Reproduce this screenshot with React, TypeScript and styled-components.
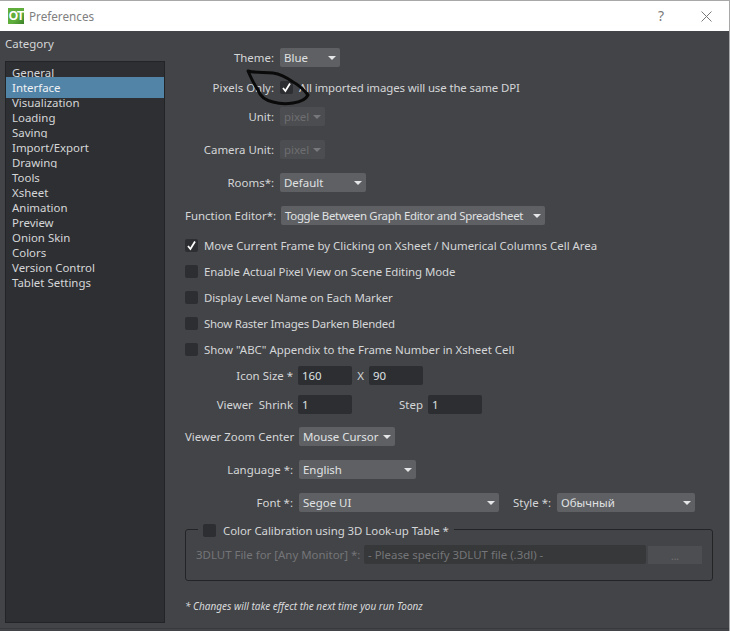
import React from "react";
import styled, { createGlobalStyle } from "styled-components";

const Global = createGlobalStyle`
  html, body { margin: 0; padding: 0; background: #434447; overflow: hidden; }
  * { box-sizing: border-box; }
`;

const Window = styled.div`
  position: relative;
  width: 730px;
  height: 631px;
  display: flex;
  flex-direction: column;
  background: #434447;
  color: #d4d6d8;
  font-family: "Noto Sans", "Open Sans", sans-serif;
  font-size: 11.45px;
  border-right: 1px solid #a8a8a8;
  overflow: hidden;
`;

const TitleBar = styled.header`
  flex: none;
  height: 31px;
  background: #fff;
  border-top: 1px solid #a8a8a8;
  display: flex;
  align-items: center;
  padding-left: 8px;
`;

const Logo = styled.div`
  width: 16px;
  height: 16px;
  background: linear-gradient(135deg, #5fae3c 60%, #3a8029);
  color: #fff;
  font: bold 12px/16px "Liberation Sans", sans-serif;
  letter-spacing: -1px;
  text-align: center;
  overflow: hidden;
`;

const Title = styled.span`
  margin-left: 5px;
  color: #808080;
  flex: 1;
  font-size: 11.7px;
`;

const TitleButton = styled.div<{ $w: number }>`
  width: ${(p) => p.$w}px;
  display: flex;
  justify-content: center;
  color: #7a7a7a;
  font-size: 14px;
  line-height: 16px;
`;

const Body = styled.main`
  flex: 1;
  display: flex;
  min-height: 0;
  border-bottom: 1px solid #38393b;
  margin-bottom: 2px;
`;

const Sidebar = styled.aside`
  flex: none;
  width: 165px;
  padding: 5px 0 5px 5px;
  display: flex;
  flex-direction: column;
`;

const CategoryTitle = styled.div`
  height: 25px;
  line-height: 16px;
`;

const List = styled.ul`
  list-style: none;
  margin: 0;
  padding: 3px 0 0;
  flex: 1;
  background: #2e2f32;
  border: 1px solid #232426;
`;

const Item = styled.li<{ $active?: boolean; $clip?: boolean }>`
  position: relative;
  padding-left: 6px;
  overflow: hidden;
  line-height: ${(p) => (p.$active ? 21 : 15)}px;
  height: ${(p) => (p.$active ? 21 : p.$clip ? 13 : 15)}px;
  margin: ${(p) => (p.$active ? "-3px 0" : p.$clip ? "0 0 2px" : "0")};
  background: ${(p) => (p.$active ? "#5284a8" : "transparent")};
  color: ${(p) => (p.$active ? "#f0f2f4" : "#d4d6d8")};
`;

const Form = styled.section`
  flex: 1;
  padding: 17px 15px 0 20px;
  display: flex;
  flex-direction: column;
`;

const Row = styled.div<{ $gap: number; $h?: number }>`
  flex: none;
  height: ${(p) => p.$h ?? 19}px;
  margin-top: ${(p) => p.$gap}px;
  display: flex;
  align-items: center;
`;

const Label = styled.label<{ $w?: number; $gap?: number }>`
  flex: none;
  width: ${(p) => (p.$w ? `${p.$w}px` : "auto")};
  margin-right: ${(p) => p.$gap ?? 6}px;
  text-align: right;
  white-space: nowrap;
`;

const Select = styled.div<{ $w: number; $disabled?: boolean; $track?: number }>`
  flex: none;
  width: ${(p) => p.$w}px;
  height: 19px;
  padding: 0 4px;
  display: flex;
  align-items: center;
  justify-content: space-between;
  border-radius: 2px;
  white-space: nowrap;
  letter-spacing: ${(p) => p.$track ?? 0}px;
  background: ${(p) => (p.$disabled ? "#4c4d50" : "#5e6063")};
  color: ${(p) => (p.$disabled ? "#6d6e71" : "#e0e2e4")};
`;

const Caret = styled.span<{ $disabled?: boolean }>`
  flex: none;
  width: 0;
  height: 0;
  border-left: 4px solid transparent;
  border-right: 4px solid transparent;
  border-top: 4px solid ${(p) => (p.$disabled ? "#77787b" : "#e4e6e8")};
`;

const Check = styled.span`
  flex: none;
  width: 13px;
  height: 13px;
  border-radius: 2px;
  background: #2d2e31;
  display: inline-flex;
  align-items: center;
  justify-content: center;
`;

const CheckText = styled.span<{ $track?: number; $gap?: number }>`
  margin-left: ${(p) => p.$gap ?? 6}px;
  white-space: nowrap;
  letter-spacing: ${(p) => p.$track ?? 0}px;
`;

const Field = styled.div<{ $w: number }>`
  flex: none;
  width: ${(p) => p.$w}px;
  height: 19px;
  padding: 0 4px;
  line-height: 19px;
  background: #2d2e31;
  border-radius: 2px;
  color: #dfe1e3;
`;

const Between = styled.span<{ $w: number; $pad?: number }>`
  flex: none;
  width: ${(p) => p.$w}px;
  padding-right: ${(p) => p.$pad ?? 0}px;
  text-align: ${(p) => (p.$pad ? "right" : "center")};
`;

const Group = styled.fieldset`
  flex: none;
  margin: 10px 1px 0 0;
  padding: 0 10px 0 10px;
  height: 59px;
  border: 1px solid #232426;
  border-radius: 3px;
`;

const Legend = styled.legend`
  margin-left: 2px;
  padding: 0 5px;
  display: flex;
  align-items: center;
  height: 14px;
  transform: translateY(1px);
`;

const LutRow = styled.div`
  display: flex;
  align-items: center;
  height: 19px;
  margin-top: 9px;
  color: #747578;
`;

const LutLabel = styled.span`
  flex: none;
  width: 163px;
  white-space: nowrap;
`;

const LutField = styled.div`
  flex: none;
  width: 282px;
  height: 19px;
  margin-left: 5px;
  padding: 0 4px;
  line-height: 19px;
  background: #373839;
  border-radius: 2px;
`;

const LutButton = styled.div`
  flex: none;
  width: 54px;
  height: 18px;
  margin-left: 2px;
  background: #4d4e51;
  text-align: center;
  line-height: 20px;
  font-size: 10px;
`;

const Note = styled.p`
  margin: 18px 0 0;
  font-size: 10px;
  font-style: italic;
  color: #d8dadc;
`;

const Scribble = styled.svg`
  position: absolute;
  left: 0;
  top: 0;
  pointer-events: none;
`;

const categories = [
  "General", "Interface", "Visualization", "Loading", "Saving", "Import/Export", "Drawing", "Tools",
  "Xsheet", "Animation", "Preview", "Onion Skin", "Colors", "Version Control", "Tablet Settings",
];

const Tick = () => (
  <svg width="11" height="11" viewBox="0 0 11 11">
    <path d="M2 6 L4.4 9 L9 1.5" fill="none" stroke="#fff" strokeWidth="1.8" />
  </svg>
);

const Drop = ({ w, value, disabled, track }: { w: number; value: string; disabled?: boolean; track?: number }) => (
  <Select $w={w} $disabled={disabled} $track={track}>
    {value}
    <Caret $disabled={disabled} />
  </Select>
);

const CheckRow = ({ gap, text, on, track }: { gap: number; text: string; on?: boolean; track?: number }) => (
  <Row $gap={gap}>
    <Check>{on && <Tick />}</Check>
    <CheckText $track={track}>{text}</CheckText>
  </Row>
);

export default function App() {
  return (
    <Window>
      <Global />
      <TitleBar>
        <Logo>OT</Logo>
        <Title>Preferences</Title>
        <TitleButton $w={44}>?</TitleButton>
        <TitleButton $w={46}>
          <svg width="11" height="11" viewBox="0 0 11 11">
            <path d="M0.5 0.5 L10.5 10.5 M10.5 0.5 L0.5 10.5" stroke="#7a7a7a" fill="none" />
          </svg>
        </TitleButton>
      </TitleBar>
      <Body>
        <Sidebar>
          <CategoryTitle>Category</CategoryTitle>
          <List>
            {categories.map((c) => (
              <Item key={c} $active={c === "Interface"} $clip={c === "Saving" || c === "Drawing"}>
                {c}
              </Item>
            ))}
          </List>
        </Sidebar>
        <Form>
          <Row $gap={0}>
            <Label $w={89}>Theme:</Label>
            <Drop w={60} value="Blue" />
          </Row>
          <Row $gap={11}>
            <Label $w={89}>Pixels Only:</Label>
            <Check><Tick /></Check>
            <CheckText $track={-0.12}>All imported images will use the same DPI</CheckText>
          </Row>
          <Row $gap={10}>
            <Label $w={89}>Unit:</Label>
            <Drop w={45} value="pixel" disabled />
          </Row>
          <Row $gap={14}>
            <Label $w={89}>Camera Unit:</Label>
            <Drop w={45} value="pixel" disabled />
          </Row>
          <Row $gap={14}>
            <Label $w={89}>Rooms*:</Label>
            <Drop w={86} value="Default" />
          </Row>
          <Row $gap={14}>
            <Label $w={89} $gap={7}>Function Editor*:</Label>
            <Drop w={264} track={-0.3} value="Toggle Between Graph Editor and Spreadsheet" />
          </Row>
          <CheckRow gap={11} on text="Move Current Frame by Clicking on Xsheet / Numerical Columns Cell Area" />
          <CheckRow gap={7} track={-0.07} text="Enable Actual Pixel View on Scene Editing Mode" />
          <CheckRow gap={7} track={-0.09} text="Display Level Name on Each Marker" />
          <CheckRow gap={7} track={-0.24} text="Show Raster Images Darken Blended" />
          <CheckRow gap={7} text={'Show "ABC" Appendix to the Frame Number in Xsheet Cell'} />
          <Row $gap={7}>
            <Label $w={108} $gap={5}>Icon Size *</Label>
            <Field $w={54}>160</Field>
            <Between $w={17}>X</Between>
            <Field $w={54}>90</Field>
          </Row>
          <Row $gap={10}>
            <Label $w={108} $gap={5}>Viewer&nbsp; Shrink</Label>
            <Field $w={54}>1</Field>
            <Between $w={76} $pad={5}>Step</Between>
            <Field $w={54}>1</Field>
          </Row>
          <Row $gap={13}>
            <Label $w={108} $gap={6}>Viewer Zoom Center</Label>
            <Drop w={96} value="Mouse Cursor" />
          </Row>
          <Row $gap={14}>
            <Label $w={108} $gap={6}>Language *:</Label>
            <Drop w={117} value="English" />
          </Row>
          <Row $gap={14}>
            <Label $w={108} $gap={6}>Font *:</Label>
            <Drop w={200} value="Segoe UI" />
            <Between $w={58} $pad={6}>Style *:</Between>
            <Drop w={138} value="Обычный" />
          </Row>
          <Group>
            <Legend>
              <Check />
              <CheckText $gap={7} $track={-0.05}>Color Calibration using 3D Look-up Table *</CheckText>
            </Legend>
            <LutRow>
              <LutLabel>3DLUT File for [Any Monitor] *:</LutLabel>
              <LutField>- Please specify 3DLUT file (.3dl) -</LutField>
              <LutButton>...</LutButton>
            </LutRow>
          </Group>
          <Note>* Changes will take effect the next time you run Toonz</Note>
        </Form>
      </Body>
      <Scribble width="730" height="631" viewBox="0 0 730 631">
        <path
          d="M248 71 C252 80 255 86 258 90 C260 96 264 100 273 102 C280 104 287 104 293 103 C300 102 306 99 308 95 C304 90 299 85 293 82 C286 77 280 74 273 73 C264 72 256 73 248 71 Z"
          fill="none"
          stroke="#0a0a0a"
          strokeWidth="3"
          strokeLinejoin="round"
        />
      </Scribble>
    </Window>
  );
}
